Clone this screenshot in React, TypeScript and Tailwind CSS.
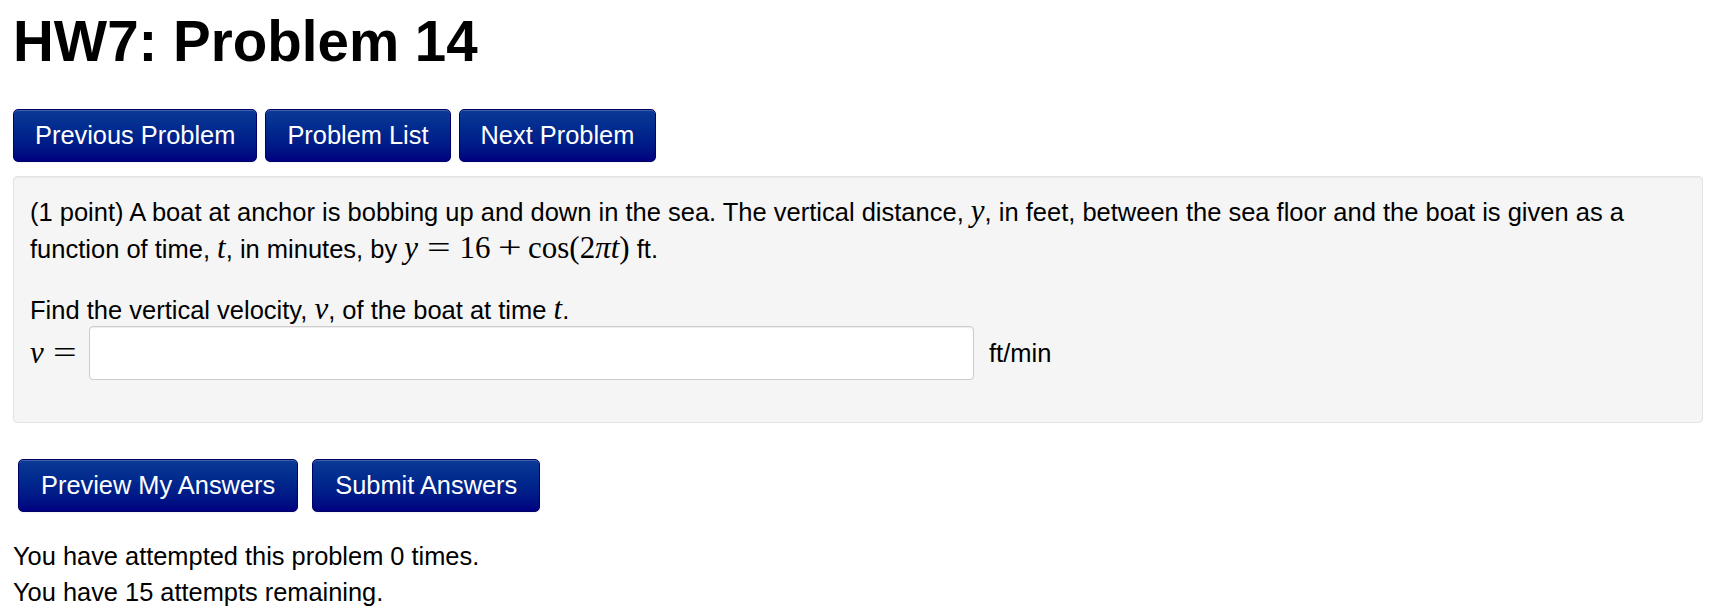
import React from 'react';

// Inline math, styled to sit like MathJax output in the surrounding sans text
function Mi({ children }: { children: React.ReactNode }) {
  return <span className="font-['Liberation_Serif',serif] text-[31px] leading-none italic">{children}</span>;
}

function Mo({ children, space = '' }: { children: React.ReactNode; space?: string }) {
  return <span className={`font-['Liberation_Serif',serif] text-[31px] leading-none ${space}`}>{children}</span>;
}

// TeX relation/binary glyphs are wider than Times ones
function Wide({ children, space }: { children: React.ReactNode; space: string }) {
  return (
    <span className={`inline-block scale-x-[1.35] font-['Liberation_Serif',serif] text-[31px] leading-none ${space}`}>
      {children}
    </span>
  );
}

function NavButton({ label, pad = 'px-[21px]' }: { label: string; pad?: string }) {
  return (
    <button
      className={`flex h-[53px] items-center rounded-[5px] border border-[#000066] bg-linear-to-b from-[#0d3a96] to-[#000080] text-[25.4px] text-white shadow-[inset_0_1px_0_rgba(255,255,255,0.2),0_1px_2px_rgba(0,0,0,0.05)] ${pad}`}
    >
      {label}
    </button>
  );
}

export default function App() {
  return (
    <div className="min-h-screen bg-white px-[13px] font-['Liberation_Sans',Arial,sans-serif] text-black">
      <h1 className="pt-[10px] text-[56.5px] leading-[64px] font-bold">HW7: Problem 14</h1>

      <div className="mt-[35px] flex gap-[8px]">
        <NavButton label="Previous Problem" />
        <NavButton label="Problem List" />
        <NavButton label="Next Problem" />
      </div>

      <div className="mt-[14px] rounded-[4px] border border-[#e3e3e3] bg-[#f5f5f5] px-[16px] pt-[17px] pb-[42px] shadow-[inset_0_1px_1px_rgba(0,0,0,0.05)]">
        <p className="text-[25.5px] leading-[37px]">
          (1 point) A boat at anchor is bobbing up and down in the sea. The vertical distance, <Mi>y</Mi>, in feet,
          between the sea floor and the boat is given as a function of time, <Mi>t</Mi>, in minutes, by <Mi>y</Mi>
          <Wide space="mx-[12px]">=</Wide>
          <Mo>16</Mo>
          <Wide space="mx-[10px]">+</Wide>
          <Mo>
            cos(2<span className="italic">πt</span>)
          </Mo>{' '}
          ft.
        </p>

        <p className="mt-[25px] text-[25.5px] leading-[35px]">
          Find the vertical velocity, <Mi>v</Mi>, of the boat at time <Mi>t</Mi>.
        </p>

        <div className="-mt-[2px] flex items-center">
          <span className="w-[59px] shrink-0">
            <Mi>v</Mi>
            <Wide space="ml-[12px]">=</Wide>
          </span>
          <input
            type="text"
            className="h-[54px] w-[885px] rounded-[4px] border border-[#cccccc] bg-white px-[10px] text-[25px] shadow-[inset_0_1px_1px_rgba(0,0,0,0.075)] outline-none"
          />
          <span className="ml-[15px] text-[25.5px]">ft/min</span>
        </div>
      </div>

      <div className="mt-[36px] ml-[5px] flex gap-[14px]">
        <NavButton label="Preview My Answers" pad="px-[22px]" />
        <NavButton label="Submit Answers" pad="px-[22px]" />
      </div>

      <div className="mt-[26px] text-[25.4px] leading-[36px]">
        <p>You have attempted this problem 0 times.</p>
        <p>You have 15 attempts remaining.</p>
      </div>
    </div>
  );
}
